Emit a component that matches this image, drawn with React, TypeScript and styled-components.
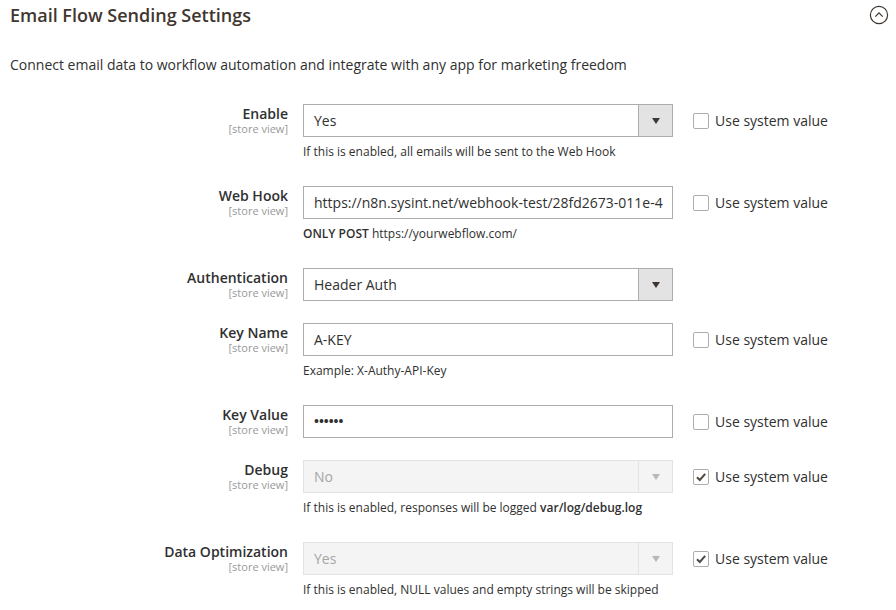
import React from "react";
import styled, { createGlobalStyle } from "styled-components";

type Row = {
  label: string;
  kind: "select" | "text" | "password";
  value: string;
  note?: React.ReactNode;
  system?: boolean; // show "Use system value"
  inherited?: boolean; // checked, field disabled
};

const rows: Row[] = [
  {
    label: "Enable",
    kind: "select",
    value: "Yes",
    note: "If this is enabled, all emails will be sent to the Web Hook",
    system: true,
  },
  {
    label: "Web Hook",
    kind: "text",
    value: "https://n8n.sysint.net/webhook-test/28fd2673-011e-4",
    note: (
      <>
        <b>ONLY POST</b> https://yourwebflow.com/
      </>
    ),
    system: true,
  },
  { label: "Authentication", kind: "select", value: "Header Auth" },
  {
    label: "Key Name",
    kind: "text",
    value: "A-KEY",
    note: "Example: X-Authy-API-Key",
    system: true,
  },
  { label: "Key Value", kind: "password", value: "••••••", system: true },
  {
    label: "Debug",
    kind: "select",
    value: "No",
    note: (
      <>
        If this is enabled, responses will be logged <b>var/log/debug.log</b>
      </>
    ),
    system: true,
    inherited: true,
  },
  {
    label: "Data Optimization",
    kind: "select",
    value: "Yes",
    note: "If this is enabled, NULL values and empty strings will be skipped",
    system: true,
    inherited: true,
  },
];

const App: React.FC = () => {
  return (
    <>
      <GlobalStyle />
      <Section>
        <Header>
          <Title>Email Flow Sending Settings</Title>
          <CollapseIcon />
        </Header>
        <Description>
          Connect email data to workflow automation and integrate with any app for marketing freedom
        </Description>
        <Form>
          {rows.map((row) => (
            <FieldRow key={row.label}>
              <LabelCol>
                <Label>{row.label}</Label>
                <Scope>[store view]</Scope>
              </LabelCol>
              <ControlCol>
                {row.kind === "select" ? (
                  <Select disabled={row.inherited}>
                    <SelectValue>{row.value}</SelectValue>
                    <SelectArrow disabled={row.inherited}>
                      <ArrowGlyph disabled={row.inherited} />
                    </SelectArrow>
                  </Select>
                ) : (
                  <TextBox password={row.kind === "password"}>{row.value}</TextBox>
                )}
                {row.note && <Note>{row.note}</Note>}
              </ControlCol>
              {row.system && (
                <SystemValue>
                  <CheckBox>{row.inherited && <CheckMark />}</CheckBox>
                  Use system value
                </SystemValue>
              )}
            </FieldRow>
          ))}
        </Form>
      </Section>
    </>
  );
};

export default App;

const CollapseIcon = () => (
  <CollapseWrap>
    <svg width="20" height="20" viewBox="0 0 20 20" fill="none">
      <circle cx="10" cy="10" r="8.6" stroke="#41362f" strokeWidth="1.2" />
      <path d="M6.3 11.6 L10 7.9 L13.7 11.6" stroke="#41362f" strokeWidth="1.3" fill="none" />
    </svg>
  </CollapseWrap>
);

const CheckMark = () => (
  <svg width="12" height="12" viewBox="0 0 12 12" fill="none">
    <path d="M2 6.2 L4.8 9 L10.2 2.8" stroke="#514943" strokeWidth="2" fill="none" />
  </svg>
);

// Styled Components

const GlobalStyle = createGlobalStyle`
  html, body {
    margin: 0;
    padding: 0;
    background: #ffffff;
  }
  body {
    font-family: "Open Sans", "Liberation Sans", sans-serif;
    color: #303030;
  }
`;

const Section = styled.div`
  width: 896px;
  height: 610px;
  padding: 0 0 0 10px;
  box-sizing: border-box;
  overflow: hidden;
`;

const Header = styled.div`
  display: flex;
  align-items: center;
  justify-content: space-between;
  height: 30px;
  padding-right: 7px;
`;

const Title = styled.h2`
  margin: 0;
  font-size: 18px;
  font-weight: 600;
  color: #41362f;
`;

const CollapseWrap = styled.span`
  display: flex;
  align-items: center;
`;

const Description = styled.p`
  margin: 24px 0 0 0;
  font-size: 14px;
  line-height: 22px;
  color: #303030;
`;

const Form = styled.div`
  display: flex;
  flex-direction: column;
  margin-top: 28px;
`;

const FieldRow = styled.div`
  display: grid;
  grid-template-columns: 278px 370px auto;
  column-gap: 15px;
  align-items: start;
  margin-bottom: 22px;
`;

const LabelCol = styled.div`
  display: flex;
  flex-direction: column;
  align-items: flex-end;
  padding-top: 1px;
`;

const Label = styled.div`
  font-size: 14px;
  font-weight: 600;
  line-height: 17px;
  color: #303030;
`;

const Scope = styled.div`
  font-size: 11px;
  line-height: 14px;
  color: #999999;
`;

const ControlCol = styled.div`
  display: flex;
  flex-direction: column;
`;

const Select = styled.div<{ disabled?: boolean }>`
  display: flex;
  height: 33px;
  box-sizing: border-box;
  border: 1px solid ${(p) => (p.disabled ? "#e3e3e3" : "#adadad")};
  background: ${(p) => (p.disabled ? "#f4f4f4" : "#ffffff")};
  color: ${(p) => (p.disabled ? "#a6a6a6" : "#303030")};
`;

const SelectValue = styled.div`
  flex: 1;
  padding: 0 10px;
  font-size: 14px;
  line-height: 31px;
`;

const SelectArrow = styled.div<{ disabled?: boolean }>`
  width: 33px;
  display: flex;
  align-items: center;
  justify-content: center;
  border-left: 1px solid ${(p) => (p.disabled ? "#e3e3e3" : "#adadad")};
  background: ${(p) => (p.disabled ? "#f4f4f4" : "#e3e3e3")};
`;

const ArrowGlyph = styled.span<{ disabled?: boolean }>`
  width: 0;
  height: 0;
  border-left: 4px solid transparent;
  border-right: 4px solid transparent;
  border-top: 6px solid ${(p) => (p.disabled ? "#b8b8b8" : "#41362f")};
`;

const TextBox = styled.div<{ password?: boolean }>`
  height: 33px;
  box-sizing: border-box;
  border: 1px solid #adadad;
  padding: 0 10px;
  font-size: ${(p) => (p.password ? "13px" : "14px")};
  font-weight: ${(p) => (p.password ? 700 : 400)};
  line-height: 31px;
  white-space: nowrap;
  overflow: hidden;
  color: #303030;
`;

const Note = styled.div`
  margin: 5px 0 2px 0;
  font-size: 12px;
  line-height: 20px;
  color: #303030;
  b {
    font-weight: 600;
  }
`;

const SystemValue = styled.label`
  display: flex;
  align-items: center;
  height: 33px;
  margin-left: 5px;
  font-size: 14px;
  color: #303030;
`;

const CheckBox = styled.span`
  width: 16px;
  height: 16px;
  box-sizing: border-box;
  border: 1px solid #adadad;
  border-radius: 2px;
  background: #ffffff;
  display: flex;
  align-items: center;
  justify-content: center;
  margin-right: 6px;
`;
